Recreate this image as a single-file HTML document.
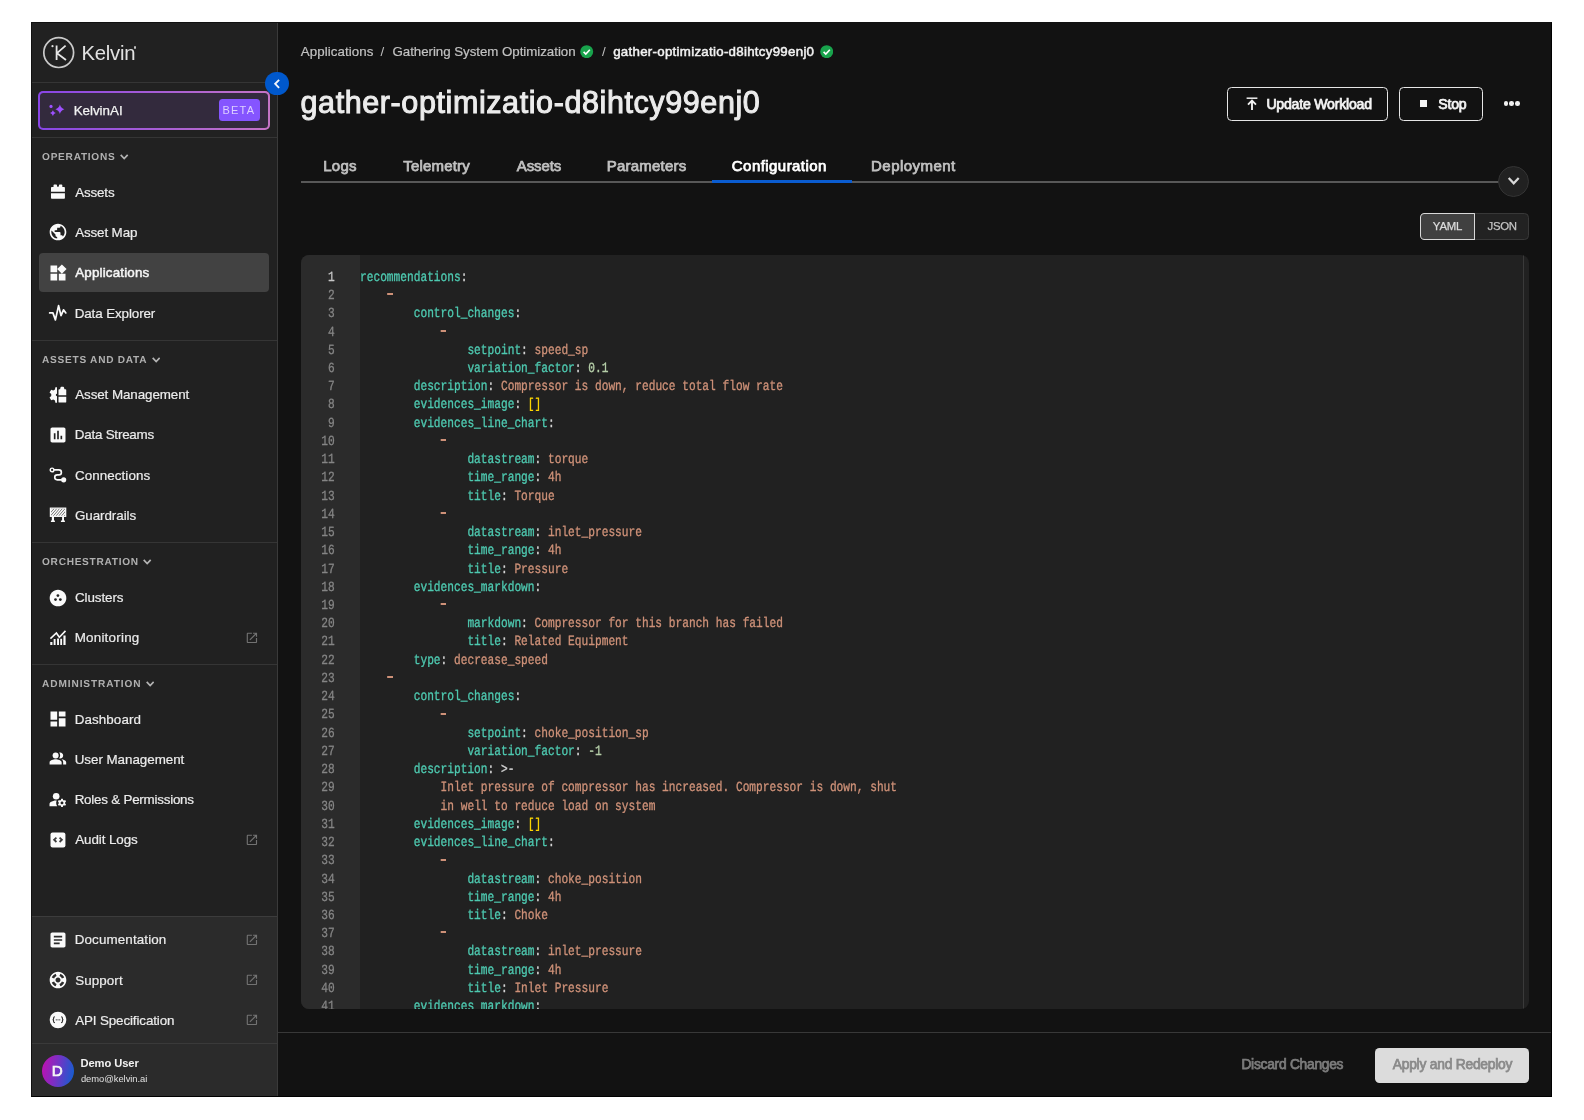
<!DOCTYPE html>
<html>
<head>
<meta charset="utf-8">
<title>gather-optimizatio-d8ihtcy99enj0</title>
<style>
*{box-sizing:border-box;margin:0;padding:0}
html,body{width:1584px;height:1120px;background:#fff;overflow:hidden}
body{font-family:"Liberation Sans",sans-serif;color:#e6e6e6;position:relative}
.abs{position:absolute}
#app{position:absolute;left:31px;top:22px;width:1521px;height:1075px;background:#121212;border:1px solid #000;border-top-color:#111;border-left-color:#111;overflow:hidden}
#wrap{will-change:transform;position:absolute;left:-32px;top:-23px;width:1584px;height:1120px}
#side{position:absolute;left:32px;top:23px;width:246px;height:1073px;background:#212121;border-right:1px solid #3a3a3a}
#sidebot{position:absolute;left:32px;top:915.6px;width:245px;height:180.4px;background:#2b2b2b;border-top:1.2px solid #3c3c3c}
.hr{position:absolute;left:32px;width:245px;height:1px;background:#353535}
.t{position:absolute;white-space:nowrap}
i{font-style:normal}
i.k{color:#4ec9b0}
i.s{color:#ce9178}
i.n{color:#b5cea8}
i.b{color:#ffd700}
i.p{color:#d4d4d4}
i.d{display:inline-block;width:8.4px;height:2px;vertical-align:3.8px;background:linear-gradient(90deg,#ce9178 0,#ce9178 7.2px,transparent 7.2px)}
#codetxt{-webkit-text-stroke:0.35px currentColor}
#codetxt i{-webkit-text-stroke:0.35px currentColor}
#editor{text-rendering:geometricPrecision}
#lnums{-webkit-text-stroke:0.3px currentColor}
.geo{text-rendering:geometricPrecision}

</style>
</head>
<body>
<div id="app"><div id="wrap">
<div id="side"></div>
<div id="sidebot"></div>
<div class="t" id="bc1" style="left:300.80px;top:42.90px;font-size:13.3px;line-height:17px;color:#c2c2c2;font-weight:normal;letter-spacing:0.077px;-webkit-text-stroke:0.2px #c2c2c2;">Applications</div><div class="t" id="bc2" style="left:380.60px;top:42.90px;font-size:13.3px;line-height:17px;color:#c2c2c2;font-weight:normal;letter-spacing:0.000px;">/</div><div class="t" id="bc3" style="left:392.50px;top:42.90px;font-size:13.3px;line-height:17px;color:#c2c2c2;font-weight:normal;letter-spacing:-0.034px;-webkit-text-stroke:0.2px #c2c2c2;">Gathering System Optimization</div><svg class="abs" style="left:580.2px;top:45.1px" width="13.400" height="13.400" viewBox="0 0 13.400 13.400"><circle cx="6.700" cy="6.700" r="6.500" fill="#18a34c"/><path d="M3.600 6.900l2.200 2.200 4-4.300" fill="none" stroke="#fff" stroke-width="1.600"/></svg><div class="t" id="bc4" style="left:602.00px;top:42.90px;font-size:13.3px;line-height:17px;color:#c2c2c2;font-weight:normal;letter-spacing:0.000px;">/</div><div class="t" id="bc5" style="left:613.20px;top:42.90px;font-size:13.3px;line-height:17px;color:#f2f2f2;font-weight:normal;letter-spacing:0.279px;-webkit-text-stroke:0.5px #f2f2f2;">gather-optimizatio-d8ihtcy99enj0</div><svg class="abs" style="left:819.5px;top:45.1px" width="13.400" height="13.400" viewBox="0 0 13.400 13.400"><circle cx="6.700" cy="6.700" r="6.500" fill="#18a34c"/><path d="M3.600 6.900l2.200 2.200 4-4.300" fill="none" stroke="#fff" stroke-width="1.600"/></svg>
<div class="t" id="title" style="left:300.55px;top:82.00px;font-size:30.5px;line-height:40px;color:#ececec;font-weight:normal;letter-spacing:0.594px;-webkit-text-stroke:1px #ececec;">gather-optimizatio-d8ihtcy99enj0</div>
<div class="abs" style="left:1227.200px;top:86.500px;width:160.500px;height:34.400px;border:1.800px solid #e6e6e6;border-radius:4.500px"></div><svg class="abs" style="left:1244.700px;top:96px" width="14" height="15" viewBox="0 0 14 15"><path d="M1.600 2.200h10.800" stroke="#f0f0f0" stroke-width="1.500"/><path d="M7 14V5M3 8.600l4-4 4 4" fill="none" stroke="#f0f0f0" stroke-width="1.900"/></svg><div class="t" id="btn1" style="left:1266.40px;top:94.90px;font-size:14.1px;line-height:18px;color:#f4f4f4;font-weight:normal;letter-spacing:-0.211px;-webkit-text-stroke:0.75px #f4f4f4;">Update Workload</div><div class="abs" style="left:1399.200px;top:86.500px;width:83.500px;height:34.400px;border:1.800px solid #e6e6e6;border-radius:4.500px"></div><div class="abs" style="left:1419.800px;top:100.200px;width:7.200px;height:7.200px;background:#f4f4f4"></div><div class="t" id="btn2" style="left:1438.35px;top:94.90px;font-size:14.1px;line-height:18px;color:#f4f4f4;font-weight:normal;letter-spacing:-0.217px;-webkit-text-stroke:0.75px #f4f4f4;">Stop</div><div class="abs" style="left:1503.6px;top:101.300px;width:4.600px;height:4.600px;border-radius:2.300px;background:#f0f0f0"></div><div class="abs" style="left:1509.4px;top:101.300px;width:4.600px;height:4.600px;border-radius:2.300px;background:#f0f0f0"></div><div class="abs" style="left:1515.2px;top:101.300px;width:4.600px;height:4.600px;border-radius:2.300px;background:#f0f0f0"></div>
<div class="abs" style="left:301px;top:181.300px;width:1200px;height:2px;background:#585858"></div><div class="abs" style="left:711.800px;top:180px;width:140.400px;height:3.200px;background:#0a5cd0"></div><div class="t" id="tab0" style="left:323.15px;top:156.00px;font-size:15px;line-height:20px;color:#c0c0c0;font-weight:normal;letter-spacing:0.283px;-webkit-text-stroke:0.75px #c0c0c0;">Logs</div><div class="t" id="tab1" style="left:403.25px;top:156.00px;font-size:15px;line-height:20px;color:#c0c0c0;font-weight:normal;letter-spacing:0.181px;-webkit-text-stroke:0.75px #c0c0c0;">Telemetry</div><div class="t" id="tab2" style="left:516.80px;top:156.00px;font-size:15px;line-height:20px;color:#c0c0c0;font-weight:normal;letter-spacing:-0.120px;-webkit-text-stroke:0.75px #c0c0c0;">Assets</div><div class="t" id="tab3" style="left:606.75px;top:156.00px;font-size:15px;line-height:20px;color:#c0c0c0;font-weight:normal;letter-spacing:0.217px;-webkit-text-stroke:0.75px #c0c0c0;">Parameters</div><div class="t" id="tab4" style="left:731.85px;top:156.00px;font-size:15px;line-height:20px;color:#ffffff;font-weight:normal;letter-spacing:0.442px;-webkit-text-stroke:0.75px #ffffff;">Configuration</div><div class="t" id="tab5" style="left:871.05px;top:156.00px;font-size:15px;line-height:20px;color:#c0c0c0;font-weight:normal;letter-spacing:0.461px;-webkit-text-stroke:0.75px #c0c0c0;">Deployment</div>
<div class="abs" style="left:1498.300px;top:165.800px;width:30.800px;height:30.900px;border-radius:16px;background:#212121;border:1px solid #343434"></div><svg class="abs" style="left:1506px;top:175px" width="16" height="12" viewBox="0 0 16 12"><path d="M2.700 3L7.700 8.300 12.700 3" fill="none" stroke="#d8d8d8" stroke-width="2.200"/></svg><div class="abs" style="left:1474px;top:213.200px;width:55px;height:26.500px;background:#222;border:1px solid #383838;border-radius:0 4.500px 4.500px 0"></div><div class="abs" style="left:1420.300px;top:212.800px;width:55.200px;height:27.200px;background:#404040;border:1.700px solid #d8d8d8;border-radius:4.500px 0.500px 0.500px 4.500px"></div><div class="t" id="yaml" style="left:1432.85px;top:219.10px;font-size:11.4px;line-height:15px;color:#dcdcdc;font-weight:normal;letter-spacing:-0.200px;-webkit-text-stroke:0.25px #dcdcdc;">YAML</div><div class="t" id="json" style="left:1487.45px;top:219.10px;font-size:11.4px;line-height:15px;color:#c4c4c4;font-weight:normal;letter-spacing:-0.250px;-webkit-text-stroke:0.25px #c4c4c4;">JSON</div>
<div class="abs" style="left:278px;top:1032px;width:1274px;height:1px;background:#383838"></div><div class="t" id="discard" style="left:1241.40px;top:1056.40px;font-size:13.8px;line-height:18px;color:#7c7c7c;font-weight:normal;letter-spacing:-0.264px;-webkit-text-stroke:0.75px #7c7c7c;">Discard Changes</div><div class="abs" style="left:1375.200px;top:1047.800px;width:153.800px;height:35px;background:#dcdcdc;border-radius:4.500px"></div><div class="t" id="apply" style="left:1392.70px;top:1056.40px;font-size:13.8px;line-height:18px;color:#8a8a8a;font-weight:normal;letter-spacing:-0.218px;-webkit-text-stroke:0.75px #8a8a8a;">Apply and Redeploy</div>

<div class="abs" id="editor" style="left:301px;top:255px;width:1228px;height:754px;background:#212121;border-radius:8px;overflow:hidden"><div class="abs" style="left:0;top:0;width:58.500px;height:754px;background:#2b2b2b"></div><div class="abs" style="left:1222px;top:0;width:1px;height:754px;background:#3a3a3a"></div><div class="abs" id="lnums" style="left:0;top:13.800000000000011px;width:42.18px;transform:scaleX(0.7990);transform-origin:0 0;font-family:'Liberation Mono',monospace;font-size:14.0px;line-height:18.233px;text-align:right;color:#858585;white-space:pre"><div style="color:#c6c6c6">1</div><div>2</div><div>3</div><div>4</div><div>5</div><div>6</div><div>7</div><div>8</div><div>9</div><div>10</div><div>11</div><div>12</div><div>13</div><div>14</div><div>15</div><div>16</div><div>17</div><div>18</div><div>19</div><div>20</div><div>21</div><div>22</div><div>23</div><div>24</div><div>25</div><div>26</div><div>27</div><div>28</div><div>29</div><div>30</div><div>31</div><div>32</div><div>33</div><div>34</div><div>35</div><div>36</div><div>37</div><div>38</div><div>39</div><div>40</div><div>41</div></div>
<div class="abs" id="codetxt" style="left:59.0px;top:13.800000000000011px;transform:scaleX(0.7990);transform-origin:0 0;font-family:'Liberation Mono',monospace;font-size:14.0px;line-height:18.233px;color:#d4d4d4;white-space:pre"><div><i class="k">recommendations</i>:</div><div>    <i class="d"></i></div><div>        <i class="k">control_changes</i>:</div><div>            <i class="d"></i></div><div>                <i class="k">setpoint</i>: <i class="s">speed_sp</i></div><div>                <i class="k">variation_factor</i>: <i class="n">0.1</i></div><div>        <i class="k">description</i>: <i class="s">Compressor is down, reduce total flow rate</i></div><div>        <i class="k">evidences_image</i>: <i class="b">[]</i></div><div>        <i class="k">evidences_line_chart</i>:</div><div>            <i class="d"></i></div><div>                <i class="k">datastream</i>: <i class="s">torque</i></div><div>                <i class="k">time_range</i>: <i class="s">4h</i></div><div>                <i class="k">title</i>: <i class="s">Torque</i></div><div>            <i class="d"></i></div><div>                <i class="k">datastream</i>: <i class="s">inlet_pressure</i></div><div>                <i class="k">time_range</i>: <i class="s">4h</i></div><div>                <i class="k">title</i>: <i class="s">Pressure</i></div><div>        <i class="k">evidences_markdown</i>:</div><div>            <i class="d"></i></div><div>                <i class="k">markdown</i>: <i class="s">Compressor for this branch has failed</i></div><div>                <i class="k">title</i>: <i class="s">Related Equipment</i></div><div>        <i class="k">type</i>: <i class="s">decrease_speed</i></div><div>    <i class="d"></i></div><div>        <i class="k">control_changes</i>:</div><div>            <i class="d"></i></div><div>                <i class="k">setpoint</i>: <i class="s">choke_position_sp</i></div><div>                <i class="k">variation_factor</i>: <i class="n">-1</i></div><div>        <i class="k">description</i>: <i class="p">&gt;-</i></div><div>            <i class="s">Inlet pressure of compressor has increased. Compressor is down, shut</i></div><div>            <i class="s">in well to reduce load on system</i></div><div>        <i class="k">evidences_image</i>: <i class="b">[]</i></div><div>        <i class="k">evidences_line_chart</i>:</div><div>            <i class="d"></i></div><div>                <i class="k">datastream</i>: <i class="s">choke_position</i></div><div>                <i class="k">time_range</i>: <i class="s">4h</i></div><div>                <i class="k">title</i>: <i class="s">Choke</i></div><div>            <i class="d"></i></div><div>                <i class="k">datastream</i>: <i class="s">inlet_pressure</i></div><div>                <i class="k">time_range</i>: <i class="s">4h</i></div><div>                <i class="k">title</i>: <i class="s">Inlet Pressure</i></div><div>        <i class="k">evidences_markdown</i>:</div></div></div>

<svg class="abs" style="left:42px;top:36px" width="34" height="34" viewBox="0 0 34 34"><circle cx="16.700" cy="16.600" r="14.900" fill="none" stroke="#cacaca" stroke-width="1.700"/><path d="M14.600 9.600v14.400M23.600 9.600l-8.600 7.500 9 6.900" fill="none" stroke="#e6e6e6" stroke-width="1.800"/><circle cx="10.500" cy="10.200" r="1.100" fill="#e0e0e0"/></svg>
<div class="t" id="kelvin" style="left:81.60px;top:39.80px;font-size:20.3px;line-height:26px;color:#e2e2e2;font-weight:normal;letter-spacing:-0.280px;">Kelvin</div><div class="abs" style="left:133.900px;top:46.300px;width:2.300px;height:2.300px;border-radius:1.200px;background:#c0c0c0"></div>
<div class="hr" style="top:82.400px"></div>
<div class="abs" style="left:38.100px;top:90.800px;width:231.500px;height:39.100px;border-radius:5px;background:linear-gradient(90deg,#8845e6,#c474c6);"></div><div class="abs" style="left:40px;top:92.600px;width:227.800px;height:35.400px;border-radius:3.500px;background:#332a3d"></div><svg class="abs" style="left:48px;top:102px" width="18" height="16" viewBox="0 0 18 16" fill="#9d50ff"><path d="M11.9 2.4000000000000004Q12.89 6.14 16.4 7.2Q12.89 8.26 11.9 12.0Q10.91 8.26 7.4 7.2Q10.91 6.14 11.9 2.4000000000000004z"/><path d="M4.9 8.2Q5.54 10.46 7.800000000000001 11.1Q5.54 11.74 4.9 14.0Q4.26 11.74 2.0000000000000004 11.1Q4.26 10.46 4.9 8.2z"/><circle cx="3" cy="4.400" r="1.600"/></svg><div class="t" id="kai" style="left:73.70px;top:101.70px;font-size:13.4px;line-height:18px;color:#f2f2f2;font-weight:normal;letter-spacing:-0.029px;-webkit-text-stroke:0.250px #f2f2f2;">KelvinAI</div><div class="abs" style="left:219.100px;top:99.400px;width:40.900px;height:21.700px;border-radius:3.500px;background:#8555ff"></div><div class="t" id="beta" style="left:222.55px;top:103.70px;font-size:11px;line-height:13px;color:#ddd0ff;font-weight:normal;letter-spacing:1.183px;">BETA</div><div class="hr" style="top:137px"></div>
<div class="t geo" id="sec1" style="left:42.05px;top:150.70px;font-size:10.1px;line-height:13px;color:#b0b0b0;font-weight:bold;letter-spacing:0.744px;">OPERATIONS</div><svg class="abs" style="left:120.2px;top:154.2px" width="8.400" height="6.400" viewBox="0 0 8.400 6.400"><path d="M0.700 0.900L4.200 4.600 7.700 0.900" fill="none" stroke="#b4b4b4" stroke-width="1.700"/></svg>
<svg class="abs" style="left:48px;top:182.1px;color:#fafafa" width="20" height="20" viewBox="0 0 24 24" fill="currentColor" ><path d="M3.600 11.800V6.900q0-1 1-1H6.600V4.100q0-1 1-1h2.200q1 0 1 1V5l1.150 1.100L13.100 5V4.100q0-1 1-1h2.100q1 0 1 1V5.900h2.100q1 0 1 1V11.800zM3.600 13.400H20.300V19.200q0 1-1 1H4.600q-1 0-1-1z"/></svg><div class="t" id="nav1" style="left:75.20px;top:183.60px;font-size:13.4px;line-height:18px;color:#ececec;font-weight:normal;letter-spacing:-0.150px;-webkit-text-stroke:0.200px #ececec;">Assets</div>
<svg class="abs" style="left:48px;top:222.4px;color:#fafafa" width="20" height="20" viewBox="0 0 24 24" fill="currentColor" ><path d="M12 2C6.48 2 2 6.48 2 12s4.48 10 10 10 10-4.48 10-10S17.52 2 12 2zm-1 17.93c-3.95-.49-7-3.85-7-7.930 0-.62.08-1.21.21-1.79L9 15v1c0 1.100.9 2 2 2v1.930zm6.900-2.540c-.26-.81-1-1.390-1.900-1.390h-1v-3c0-.55-.45-1-1-1H8v-2h2c.55 0 1-.45 1-1V7h2c1.100 0 2-.9 2-2v-.41c2.930 1.190 5 4.060 5 7.410 0 2.080-.8 3.970-2.100 5.390z"/></svg><div class="t" id="nav2" style="left:75.20px;top:223.90px;font-size:13.4px;line-height:18px;color:#ececec;font-weight:normal;letter-spacing:-0.131px;-webkit-text-stroke:0.200px #ececec;">Asset Map</div>
<div class="abs" style="left:39px;top:253.2px;width:230px;height:38.600px;background:#424242;border-radius:4px"></div><svg class="abs" style="left:48px;top:262.6px;color:#fafafa" width="20" height="20" viewBox="0 0 24 24" fill="currentColor" ><path d="M13 13v8h8v-8h-8zM3 21h8v-8H3v8zM3 3v8h8V3H3zm13.660-1.310L11 7.340 16.660 13l5.660-5.660-5.660-5.650z"/></svg><div class="t" id="nav3" style="left:75.20px;top:264.10px;font-size:13.4px;line-height:18px;color:#f6f6f6;font-weight:normal;letter-spacing:0.168px;-webkit-text-stroke:0.500px #f4f4f4;">Applications</div>
<svg class="abs" style="left:48px;top:303.0px;color:#fafafa" width="20" height="20" viewBox="0 0 24 24" fill="currentColor" ><path d="M2 11.900H5.900L8.900 20.200 12.700 3.200 15.600 15.200 18.600 8.200 21.400 11.900" fill="none" stroke="currentColor" stroke-width="2.100" stroke-linejoin="round" stroke-linecap="round"/></svg><div class="t" id="nav4" style="left:74.70px;top:304.50px;font-size:13.4px;line-height:18px;color:#ececec;font-weight:normal;letter-spacing:-0.104px;-webkit-text-stroke:0.200px #ececec;">Data Explorer</div>
<div class="hr" style="top:340px"></div>
<div class="t geo" id="sec2" style="left:42.05px;top:353.90px;font-size:10.1px;line-height:13px;color:#b0b0b0;font-weight:bold;letter-spacing:0.750px;">ASSETS AND DATA</div><svg class="abs" style="left:152.0px;top:357.4px" width="8.400" height="6.400" viewBox="0 0 8.400 6.400"><path d="M0.700 0.900L4.200 4.600 7.700 0.900" fill="none" stroke="#b4b4b4" stroke-width="1.700"/></svg>
<svg class="abs" style="left:48px;top:384.5px;color:#fafafa" width="20" height="20" viewBox="0 0 24 24" fill="currentColor" ><clipPath id="cg"><rect x="0" y="0" width="10.800" height="24"/></clipPath><g clip-path="url(#cg)"><path d="M13.24 5.44L12.75 2.81L8.85 2.81L8.36 5.44L6.34 6.61L3.81 5.71L1.86 9.10L3.90 10.83L3.90 13.17L1.86 14.90L3.81 18.29L6.34 17.39L8.36 18.56L8.85 21.19L12.75 21.19L13.24 18.56L15.26 17.39L17.79 18.29L19.74 14.90L17.70 13.17L17.70 10.83L19.74 9.10L17.79 5.71L15.26 6.61z"/><circle cx="10.800" cy="12" r="1.400" fill="#212121"/></g><path d="M12.600 12.300V6.100q0-1 1-1h.9l.5-2.200q.2-.8 1-.8h2.200q.8 0 1 .8l.5 2.200H20.900q1 0 1 1V12.300zM12.600 14.100H21.900V20q0 1-1 1H13.600q-1 0-1-1z"/></svg><div class="t" id="nav5" style="left:75.20px;top:386.00px;font-size:13.4px;line-height:18px;color:#ececec;font-weight:normal;letter-spacing:-0.083px;-webkit-text-stroke:0.200px #ececec;">Asset Management</div>
<svg class="abs" style="left:48px;top:424.8px;color:#fafafa" width="20" height="20" viewBox="0 0 24 24" fill="currentColor" ><path d="M19 3H5c-1.100 0-2 .9-2 2v14c0 1.100.9 2 2 2h14c1.100 0 2-.9 2-2V5c0-1.100-.9-2-2-2zM9 17H7v-7h2v7zm4 0h-2V7h2v10zm4 0h-2v-4h2v4z"/></svg><div class="t" id="nav6" style="left:74.70px;top:426.30px;font-size:13.4px;line-height:18px;color:#ececec;font-weight:normal;letter-spacing:-0.209px;-webkit-text-stroke:0.200px #ececec;">Data Streams</div>
<svg class="abs" style="left:48px;top:465.1px;color:#fafafa" width="20" height="20" viewBox="0 0 24 24" fill="currentColor" ><circle cx="4.900" cy="5.900" r="2.200" fill="none" stroke="currentColor" stroke-width="1.700"/><circle cx="18.800" cy="17.800" r="3.100"/><path d="M7.200 5.900H13.100a2.950 2.950 0 010 5.900H11.100a3 3 0 000 6H16.500" fill="none" stroke="currentColor" stroke-width="2"/></svg><div class="t" id="nav7" style="left:74.95px;top:466.60px;font-size:13.4px;line-height:18px;color:#ececec;font-weight:normal;letter-spacing:0.075px;-webkit-text-stroke:0.200px #ececec;">Connections</div>
<svg class="abs" style="left:48px;top:505.4px;color:#fafafa" width="20" height="20" viewBox="0 0 24 24" fill="currentColor" ><clipPath id="cgd"><rect x="3.200" y="4.100" width="17.700" height="9.200"/></clipPath><rect x="2.900" y="3.800" width="18.300" height="9.800" fill="none" stroke="currentColor" stroke-width="1.500"/><g clip-path="url(#cgd)" stroke="currentColor" stroke-width="1.900"><path d="M-6.0 14l9-10.500M-2.7 14l9-10.500M0.6 14l9-10.500M3.9 14l9-10.500M7.2 14l9-10.500M10.5 14l9-10.500M13.8 14l9-10.500M17.1 14l9-10.500M20.4 14l9-10.500"/></g><path d="M4.600 14.200h2.600v4.400h1.100v1.700H3.500v-1.700h1.100zM16.900 14.200h2.300v4.400h1.100v1.700H15.500v-1.700h1.400z"/></svg><div class="t" id="nav8" style="left:74.95px;top:506.90px;font-size:13.4px;line-height:18px;color:#ececec;font-weight:normal;letter-spacing:-0.056px;-webkit-text-stroke:0.200px #ececec;">Guardrails</div>
<div class="hr" style="top:542.300px"></div>
<div class="t geo" id="sec3" style="left:42.05px;top:555.60px;font-size:10.1px;line-height:13px;color:#b0b0b0;font-weight:bold;letter-spacing:0.725px;">ORCHESTRATION</div><svg class="abs" style="left:143.2px;top:559.1px" width="8.400" height="6.400" viewBox="0 0 8.400 6.400"><path d="M0.700 0.900L4.200 4.600 7.700 0.900" fill="none" stroke="#b4b4b4" stroke-width="1.700"/></svg>
<svg class="abs" style="left:48px;top:587.6px;color:#fafafa" width="20" height="20" viewBox="0 0 24 24" fill="currentColor" ><path d="M12 2C6.480 2 2 6.480 2 12s4.480 10 10 10 10-4.480 10-10S17.520 2 12 2z"/><g fill="#212121"><circle cx="11.900" cy="9.100" r="1.650"/><circle cx="9" cy="13.900" r="1.650"/><circle cx="14.800" cy="13.900" r="1.650"/></g></svg><div class="t" id="nav9" style="left:74.95px;top:589.10px;font-size:13.4px;line-height:18px;color:#ececec;font-weight:normal;letter-spacing:-0.086px;-webkit-text-stroke:0.200px #ececec;">Clusters</div>
<svg class="abs" style="left:48px;top:627.7px;color:#fafafa" width="20" height="20" viewBox="0 0 24 24" fill="currentColor" ><path d="M2.700 16.800H5.300V20.500H2.700zM6.800 13.200H9.100V20.500H6.800zM10.900 12.500H13.200V20.500H10.900zM14.700 12.900H16.900V20.500H14.700zM18.500 9H21.100V20.500H18.500z"/><path d="M2.900 12.700L10.100 6l3.500 5.100L21 3.400" fill="none" stroke="currentColor" stroke-width="1.900"/></svg><div class="t" id="nav10" style="left:74.70px;top:629.20px;font-size:13.4px;line-height:18px;color:#ececec;font-weight:normal;letter-spacing:0.228px;-webkit-text-stroke:0.200px #ececec;">Monitoring</div><svg class="abs" style="left:245.1px;top:630.6px;color:#727272" width="13.8" height="13.8" viewBox="0 0 24 24" fill="currentColor" ><path d="M19 19H5V5h7V3H5c-1.110 0-2 .9-2 2v14c0 1.100.890 2 2 2h14c1.100 0 2-.9 2-2v-7h-2v7zM14 3v2h3.590l-9.830 9.830 1.410 1.410L19 6.410V10h2V3h-7z"/></svg>
<div class="hr" style="top:664.300px"></div>
<div class="t geo" id="sec4" style="left:42.05px;top:677.60px;font-size:10.1px;line-height:13px;color:#b0b0b0;font-weight:bold;letter-spacing:0.900px;">ADMINISTRATION</div><svg class="abs" style="left:145.7px;top:681.1px" width="8.400" height="6.400" viewBox="0 0 8.400 6.400"><path d="M0.700 0.900L4.200 4.600 7.700 0.900" fill="none" stroke="#b4b4b4" stroke-width="1.700"/></svg>
<svg class="abs" style="left:48px;top:709.0px;color:#fafafa" width="20" height="20" viewBox="0 0 24 24" fill="currentColor" ><path d="M3 13h8V3H3v10zm0 8h8v-6H3v6zm10 0h8V11h-8v10zm0-18v6h8V3h-8z"/></svg><div class="t" id="nav11" style="left:74.70px;top:710.50px;font-size:13.4px;line-height:18px;color:#ececec;font-weight:normal;letter-spacing:0.094px;-webkit-text-stroke:0.200px #ececec;">Dashboard</div>
<svg class="abs" style="left:48px;top:749.3px;color:#fafafa" width="20" height="20" viewBox="0 0 24 24" fill="currentColor" ><g transform="translate(1,0.500) scale(0.905)"><path d="M16.670 13.130C18.040 14.060 19 15.320 19 17v3h4v-3c0-2.180-3.570-3.470-6.330-3.870z"/><circle cx="9" cy="8" r="4"/><path d="M15 12c2.210 0 4-1.790 4-4s-1.790-4-4-4c-.47 0-.91.100-1.330.240C14.500 5.270 15 6.580 15 8s-.5 2.730-1.330 3.760c.42.140.86.240 1.330.240zM9 13c-2.670 0-8 1.340-8 4v3h16v-3c0-2.660-5.330-4-8-4z"/></g></svg><div class="t" id="nav12" style="left:74.70px;top:750.80px;font-size:13.4px;line-height:18px;color:#ececec;font-weight:normal;letter-spacing:-0.036px;-webkit-text-stroke:0.200px #ececec;">User Management</div>
<svg class="abs" style="left:48px;top:789.6px;color:#fafafa" width="20" height="20" viewBox="0 0 24 24" fill="currentColor" ><g transform="translate(-0.200,-0.500)"><circle cx="10" cy="8" r="4"/><path d="M10.670 13.020C10.450 13.010 10.230 13 10 13c-2.420 0-4.680.67-6.610 1.820C2.510 15.340 2 16.320 2 17.350V20h9.260c-.79-1.130-1.260-2.510-1.260-4 0-1.070.25-2.070.67-2.980zM20.750 16c0-.22-.03-.42-.06-.63l1.140-1.010-1-1.730-1.450.49c-.32-.27-.68-.48-1.080-.63L18 11h-2l-.3 1.490c-.4.150-.76.360-1.080.630l-1.450-.49-1 1.730 1.140 1.010c-.3.210-.6.410-.6.630s.3.420.6.630l-1.140 1.010 1 1.730 1.450-.49c.32.270.68.480 1.080.630L16 21h2l.3-1.490c.4-.15.760-.36 1.080-.63l1.450.49 1-1.730-1.140-1.010c.03-.21.06-.41.06-.63zM17 17.700c-.94 0-1.700-.76-1.700-1.700s.76-1.700 1.700-1.700 1.700.76 1.700 1.700-.76 1.700-1.700 1.700z"/></g></svg><div class="t" id="nav13" style="left:74.70px;top:791.10px;font-size:13.4px;line-height:18px;color:#ececec;font-weight:normal;letter-spacing:-0.233px;-webkit-text-stroke:0.200px #ececec;">Roles &amp; Permissions</div>
<svg class="abs" style="left:48px;top:829.9px;color:#fafafa" width="20" height="20" viewBox="0 0 24 24" fill="currentColor" ><rect x="3" y="2.900" width="17.900" height="18.100" rx="2.500"/><path d="M10.100 9.100L7.300 11.700l2.800 2.700M13.900 9.100l2.800 2.600-2.800 2.700" fill="none" stroke="#3c3c3c" stroke-width="2.100"/></svg><div class="t" id="nav14" style="left:75.20px;top:831.40px;font-size:13.4px;line-height:18px;color:#ececec;font-weight:normal;letter-spacing:-0.083px;-webkit-text-stroke:0.200px #ececec;">Audit Logs</div><svg class="abs" style="left:245.1px;top:832.8px;color:#727272" width="13.8" height="13.8" viewBox="0 0 24 24" fill="currentColor" ><path d="M19 19H5V5h7V3H5c-1.110 0-2 .9-2 2v14c0 1.100.890 2 2 2h14c1.100 0 2-.9 2-2v-7h-2v7zM14 3v2h3.590l-9.830 9.830 1.410 1.410L19 6.410V10h2V3h-7z"/></svg>
<svg class="abs" style="left:48px;top:929.8px;color:#fafafa" width="20" height="20" viewBox="0 0 24 24" fill="currentColor" ><path d="M19 3H5c-1.100 0-2 .9-2 2v14c0 1.100.9 2 2 2h14c1.100 0 2-.9 2-2V5c0-1.100-.9-2-2-2zm-5 14H7v-2h7v2zm3-4H7v-2h10v2zm0-4H7V7h10v2z"/></svg><div class="t" id="nav15" style="left:74.70px;top:931.30px;font-size:13.4px;line-height:18px;color:#ececec;font-weight:normal;letter-spacing:0.129px;-webkit-text-stroke:0.200px #ececec;">Documentation</div><svg class="abs" style="left:245.1px;top:932.7px;color:#727272" width="13.8" height="13.8" viewBox="0 0 24 24" fill="currentColor" ><path d="M19 19H5V5h7V3H5c-1.110 0-2 .9-2 2v14c0 1.100.890 2 2 2h14c1.100 0 2-.9 2-2v-7h-2v7zM14 3v2h3.590l-9.830 9.830 1.410 1.410L19 6.410V10h2V3h-7z"/></svg>
<svg class="abs" style="left:48px;top:970.1px;color:#fafafa" width="20" height="20" viewBox="0 0 24 24" fill="currentColor" ><path d="M12 2C6.480 2 2 6.480 2 12s4.480 10 10 10 10-4.480 10-10S17.520 2 12 2zm7.460 7.120l-2.780 1.150c-.51-1.360-1.580-2.440-2.950-2.940l1.150-2.780c2.100.8 3.770 2.470 4.580 4.570zM12 15c-1.660 0-3-1.340-3-3s1.340-3 3-3 3 1.340 3 3-1.340 3-3 3zM9.130 4.540l1.170 2.780c-1.380.5-2.470 1.590-2.980 2.970L4.540 9.130c.81-2.110 2.480-3.780 4.590-4.590zM4.540 14.870l2.780-1.150c.51 1.380 1.590 2.460 2.970 2.960l-1.170 2.780c-2.100-.81-3.770-2.480-4.580-4.590zm10.340 4.590l-1.150-2.780c1.370-.51 2.450-1.590 2.950-2.970l2.780 1.170c-.81 2.100-2.480 3.770-4.580 4.580z"/></svg><div class="t" id="nav16" style="left:75.20px;top:971.60px;font-size:13.4px;line-height:18px;color:#ececec;font-weight:normal;letter-spacing:0.092px;-webkit-text-stroke:0.200px #ececec;">Support</div><svg class="abs" style="left:245.1px;top:973.0px;color:#727272" width="13.8" height="13.8" viewBox="0 0 24 24" fill="currentColor" ><path d="M19 19H5V5h7V3H5c-1.110 0-2 .9-2 2v14c0 1.100.890 2 2 2h14c1.100 0 2-.9 2-2v-7h-2v7zM14 3v2h3.590l-9.830 9.830 1.410 1.410L19 6.410V10h2V3h-7z"/></svg>
<svg class="abs" style="left:48px;top:1010.2px;color:#fafafa" width="20" height="20" viewBox="0 0 24 24" fill="currentColor" ><circle cx="12" cy="12" r="10"/><g fill="none" stroke="#2b2b2b" stroke-width="1.300"><path d="M8.300 8.100q-1.600 0-1.600 1.400v1q0 1.100-1.200 1.100q1.200 0 1.200 1.100v1q0 1.400 1.600 1.400M15.700 8.100q1.600 0 1.600 1.400v1q0 1.100 1.200 1.100q-1.200 0-1.200 1.100v1q0 1.400-1.600 1.400"/></g><g fill="#2b2b2b"><circle cx="9.900" cy="11.700" r=".75"/><circle cx="12" cy="11.700" r=".75"/><circle cx="14.100" cy="11.700" r=".75"/></g></svg><div class="t" id="nav17" style="left:75.20px;top:1011.70px;font-size:13.4px;line-height:18px;color:#ececec;font-weight:normal;letter-spacing:-0.125px;-webkit-text-stroke:0.200px #ececec;">API Specification</div><svg class="abs" style="left:245.1px;top:1013.1px;color:#727272" width="13.8" height="13.8" viewBox="0 0 24 24" fill="currentColor" ><path d="M19 19H5V5h7V3H5c-1.110 0-2 .9-2 2v14c0 1.100.890 2 2 2h14c1.100 0 2-.9 2-2v-7h-2v7zM14 3v2h3.590l-9.830 9.830 1.410 1.410L19 6.410V10h2V3h-7z"/></svg>
<div class="hr" style="top:1043px;background:#3a3a3a"></div>
<div class="abs" style="left:42.200px;top:1055.300px;width:31.400px;height:31.400px;border-radius:16px;background:linear-gradient(100deg,#c010b0 3%,#7a30c4 45%,#1060d0 97%)"></div><div class="t" id="uD" style="left:51.65px;top:1061.30px;font-size:15.2px;line-height:20px;color:#f4f4f4;font-weight:normal;letter-spacing:0.000px;-webkit-text-stroke:0.700px #f4f4f4;">D</div><div class="t" id="uname" style="left:80.45px;top:1055.50px;font-size:11.2px;line-height:14px;color:#f2f2f2;font-weight:bold;letter-spacing:-0.081px;">Demo User</div><div class="t" id="umail" style="left:80.95px;top:1073.20px;font-size:9.4px;line-height:12px;color:#e0e0e0;font-weight:normal;letter-spacing:-0.031px;">demo@kelvin.ai</div><div class="abs" style="left:265.100px;top:71.700px;width:23.500px;height:23.400px;border-radius:12px;background:#0058cc"></div><svg class="abs" style="left:270.500px;top:77.500px" width="12" height="12" viewBox="0 0 12 12"><path d="M8.100 1.900L4.200 5.850l3.900 3.950" fill="none" stroke="#f4f6fa" stroke-width="1.900"/></svg>

</div></div>
</body>
</html>
